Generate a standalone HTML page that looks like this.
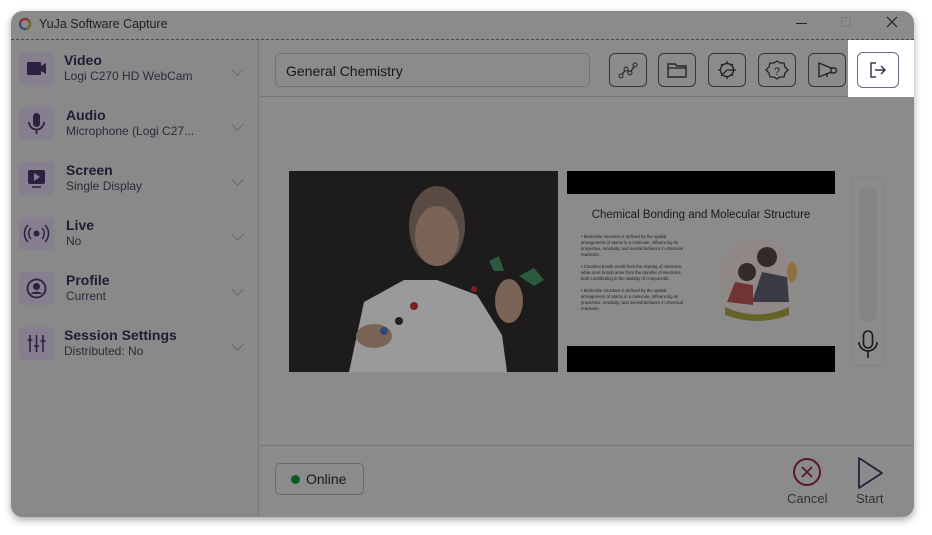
<!DOCTYPE html>
<html><head><meta charset="utf-8"><style>
*{margin:0;padding:0;box-sizing:border-box}
body{width:932px;height:535px;background:#fff;font-family:"Liberation Sans",sans-serif;position:relative;overflow:hidden}
.win{position:absolute;left:11px;top:11px;width:903px;height:506px;background:#8b8b8b;border-radius:12px;box-shadow:0 3px 8px rgba(0,0,0,.35);overflow:hidden}
.abs{position:absolute}
.tb{left:0;top:0;width:903px;height:29px;border-bottom:1px dashed #4a4a4a}
.side{left:0;top:29px;width:248px;height:477px;border-right:1px solid #777;background:#898989}
.tile{position:absolute;left:8px;width:35px;height:33px;background:#857f8f;border-radius:4px}
.tt{position:absolute;font-weight:bold;font-size:14px;color:#221c33}
.st{position:absolute;font-size:12px;color:#2e2a38}
.chev{position:absolute;left:222px;width:9px;height:9px;border-right:1.5px solid #6a6a6a;border-bottom:1.5px solid #6a6a6a;transform:rotate(45deg)}
.btn{position:absolute;top:42px;width:38px;height:34px;border:1px solid #34343c;border-radius:6px}
</style></head><body>
<div class="win">
 <div class="abs tb">
  <svg class="abs" style="left:6px;top:5px" width="16" height="16" viewBox="0 0 16 16"><path d="M3 8a5 5 0 0 1 9-3" stroke="#8a3a3a" stroke-width="2.5" fill="none"/><path d="M12 5a5 5 0 0 1-3 8" stroke="#6b6a2a" stroke-width="2.5" fill="none"/><path d="M9 13a5 5 0 0 1-6-5" stroke="#3a4f80" stroke-width="2.5" fill="none"/></svg>
  <div class="abs" style="left:28px;top:6px;font-size:12.5px;color:#222">YuJa Software Capture</div>
  <div class="abs" style="left:785px;top:12px;width:11px;height:1px;background:#222"></div>
  <div class="abs" style="left:830px;top:6px;width:10px;height:10px;border:1px solid #7a7a7a"></div>
  <svg class="abs" style="left:875px;top:5px" width="12" height="12"><path d="M1 1l10 10M11 1L1 11" stroke="#222" stroke-width="1.2"/></svg>
 </div>
 <div class="abs side">
  <div class="tile" style="top:12px"><svg width="35" height="33"><rect x="8" y="10" width="14" height="13" rx="1" fill="#2a2240"/><path d="M22 14l5-3v11l-5-3z" fill="#2a2240"/></svg></div>
  <div class="tt" style="left:53px;top:12px">Video</div><div class="st" style="left:53px;top:29px">Logi C270 HD WebCam</div><div class="chev" style="top:25px"></div>
  <div class="tile" style="top:67px"><svg width="35" height="33"><rect x="14" y="6" width="7" height="14" rx="3.5" fill="#2a2240"/><path d="M10 15a7.5 7.5 0 0 0 15 0M17.5 22v5" stroke="#2a2240" stroke-width="1.8" fill="none"/></svg></div>
  <div class="tt" style="left:55px;top:67px">Audio</div><div class="st" style="left:55px;top:84px">Microphone (Logi C27...</div><div class="chev" style="top:80px"></div>
  <div class="tile" style="top:122px"><svg width="35" height="33"><rect x="9" y="8" width="17" height="14" rx="2" fill="#2a2240"/><path d="M15 11v8l6-4z" fill="#857f8f"/><path d="M13 25h9" stroke="#2a2240" stroke-width="1.5"/></svg></div>
  <div class="tt" style="left:55px;top:122px">Screen</div><div class="st" style="left:55px;top:139px">Single Display</div><div class="chev" style="top:135px"></div>
  <div class="tile" style="top:177px"><svg width="35" height="33"><circle cx="17.5" cy="16.5" r="3" fill="#2a2240"/><path d="M12 11a8 8 0 0 0 0 11M23 11a8 8 0 0 1 0 11M9 8a12 12 0 0 0 0 17M26 8a12 12 0 0 1 0 17" stroke="#2a2240" stroke-width="1.5" fill="none"/></svg></div>
  <div class="tt" style="left:55px;top:177px">Live</div><div class="st" style="left:55px;top:194px">No</div><div class="chev" style="top:190px"></div>
  <div class="tile" style="top:232px"><svg width="35" height="33"><circle cx="17.5" cy="16.5" r="9" stroke="#2a2240" stroke-width="1.8" fill="none"/><circle cx="17.5" cy="14.5" r="3.5" fill="#2a2240"/><path d="M11.5 22a7 5 0 0 1 12 0" fill="#2a2240"/></svg></div>
  <div class="tt" style="left:55px;top:232px">Profile</div><div class="st" style="left:55px;top:249px">Current</div><div class="chev" style="top:245px"></div>
  <div class="tile" style="top:287px"><svg width="35" height="33"><path d="M11 8v17M17.5 8v17M24 8v17M8.5 13h5M15 19h5M21.5 14h5" stroke="#2a2240" stroke-width="1.6"/></svg></div>
  <div class="tt" style="left:53px;top:287px">Session Settings</div><div class="st" style="left:53px;top:304px">Distributed: No</div><div class="chev" style="top:300px"></div>
 </div>
 <div class="abs" style="left:249px;top:85px;width:654px;height:1px;background:#777"></div>
 <div class="abs" style="left:264px;top:42px;width:315px;height:34px;border:1px solid #737373;border-radius:5px;font-size:14px;color:#181818;padding:9px 10px">General Chemistry</div>
 <div class="btn" style="left:598px"><svg width="36" height="32"><path d="M11 22l5-7 4 4 5-8" stroke="#24242a" stroke-width="1.3" fill="none"/><circle cx="11" cy="22" r="2" fill="#8b8b8b" stroke="#24242a"/><circle cx="16" cy="15" r="2" fill="#8b8b8b" stroke="#24242a"/><circle cx="20" cy="19" r="2" fill="#8b8b8b" stroke="#24242a"/><circle cx="25" cy="11" r="2" fill="#8b8b8b" stroke="#24242a"/></svg></div>
 <div class="btn" style="left:647px"><svg width="36" height="32"><path d="M9 10h7l2 2h9v11H9z" stroke="#24242a" stroke-width="1.4" fill="none"/><path d="M9 14h18" stroke="#24242a" stroke-width="1.2"/></svg></div>
 <div class="btn" style="left:697px"><svg width="36" height="32"><circle cx="18" cy="16" r="6.5" stroke="#24242a" stroke-width="1.4" fill="none"/><path d="M18 7v3M18 22v3M9 16h3M24 16h3M12 10l2 2M22 20l2 2M12 22l2-2M22 12l2-2M18 16h6M18 16l-4 4" stroke="#24242a" stroke-width="1.3"/></svg></div>
 <div class="btn" style="left:747px"><svg width="36" height="32"><path d="M18 7l3 2 4 0 1 4 3 3-3 3-1 4-4 0-3 2-3-2-4 0-1-4-3-3 3-3 1-4 4 0z" stroke="#24242a" stroke-width="1.3" fill="none"/><text x="18" y="21" font-size="11" text-anchor="middle" fill="#24242a" font-family="Liberation Sans">?</text></svg></div>
 <div class="btn" style="left:797px"><svg width="36" height="32"><path d="M10 9l12 5v4l-12 5z" stroke="#24242a" stroke-width="1.4" fill="none"/><path d="M22 14h3a2.5 2.5 0 0 1 0 5h-3M18 19v4" stroke="#24242a" stroke-width="1.4" fill="none"/></svg></div>
 <div class="abs" style="left:837px;top:29px;width:66px;height:57px;background:#fff"></div>
 <div class="btn" style="left:846px;top:41px;width:42px;height:36px;border-color:#6e6880"><svg width="40" height="34"><path d="M18 10h-5v14h5" stroke="#3a3550" stroke-width="1.5" fill="none"/><path d="M17 17h10M23 13l4 4-4 4" stroke="#3a3550" stroke-width="1.5" fill="none"/></svg></div>
 <div class="abs" style="left:278px;top:160px;width:269px;height:201px;background:#1d1b1b;overflow:hidden">
  <svg width="269" height="201"><ellipse cx="148" cy="55" rx="28" ry="40" fill="#5a4a44"/><ellipse cx="148" cy="65" rx="22" ry="30" fill="#7a6458"/><path d="M60 201l15-70 40-22 33 0 40 15 25 40 5 37z" fill="#9a9a9a"/><ellipse cx="85" cy="165" rx="18" ry="12" fill="#7a6458"/><ellipse cx="220" cy="130" rx="14" ry="22" fill="#7a6458"/><circle cx="110" cy="150" r="4" fill="#222"/><circle cx="125" cy="135" r="4" fill="#7a2222"/><circle cx="95" cy="160" r="4" fill="#2a4a70"/><path d="M230 105l15-8 10 12-10 6z M200 90l10-5 5 15-10 0z" fill="#2a5a40"/><circle cx="185" cy="118" r="3" fill="#7a2222"/></svg>
 </div>
 <div class="abs" style="left:556px;top:160px;width:268px;height:201px;background:#000">
  <div class="abs" style="left:0;top:23px;width:268px;height:152px;background:#8b8b8b">
   <div class="abs" style="left:0;top:15px;width:268px;text-align:center;font-size:11.5px;color:#1a1a1a">Chemical Bonding and Molecular Structure</div>
   <div class="abs" style="left:14px;top:40px;width:110px;font-size:4.3px;line-height:6px;color:#1e1e1e">• Molecular structure is defined by the spatial arrangement of atoms in a molecule, influencing its properties, reactivity, and overall behavior in chemical reactions.<br><br>• Covalent bonds result from the sharing of electrons, while ionic bonds arise from the transfer of electrons, both contributing to the stability of compounds.<br><br>• Molecular structure is defined by the spatial arrangement of atoms in a molecule, influencing its properties, reactivity, and overall behavior in chemical reactions.</div>
   <svg class="abs" style="left:140px;top:38px" width="100" height="90"><ellipse cx="50" cy="45" rx="38" ry="38" fill="#908886"/><path d="M18 75q32 15 64 0l0 8q-32 12-64 0z" fill="#666228"/><circle cx="60" cy="25" r="10" fill="#332a2a"/><circle cx="40" cy="40" r="9" fill="#332a2a"/><path d="M45 70l10-30 25 5 2 25z" fill="#3a3a44"/><path d="M20 70l8-20 18 3 0 20z" fill="#703434"/><ellipse cx="85" cy="40" rx="5" ry="10" fill="#8e7040"/></svg>
  </div>
 </div>
 <div class="abs" style="left:840px;top:166px;width:33px;height:189px;border:1px solid #828282;border-radius:5px"></div>
 <div class="abs" style="left:848px;top:176px;width:18px;height:135px;border-radius:9px;background:#858585"></div>
 <svg class="abs" style="left:845px;top:318px" width="24" height="34"><rect x="7.5" y="2" width="9" height="17" rx="4.5" stroke="#181818" stroke-width="1.6" fill="none"/><path d="M3 13a9 9 0 0 0 18 0M12 22v7" stroke="#181818" stroke-width="1.6" fill="none"/></svg>
 <div class="abs" style="left:249px;top:434px;width:654px;height:1px;background:#777"></div>
 <div class="abs" style="left:264px;top:452px;width:89px;height:32px;border:1px solid #6a6a6a;border-radius:5px;font-size:14px;color:#181818;padding:7px 0 0 30px">Online<div class="abs" style="left:15px;top:11px;width:9px;height:9px;border-radius:50%;background:#0c5a2a"></div></div>
 <svg class="abs" style="left:781px;top:446px" width="30" height="30"><circle cx="15" cy="15" r="13" stroke="#5a1828" stroke-width="2" fill="none"/><path d="M10 10l10 10M20 10l-10 10" stroke="#5a1828" stroke-width="1.8"/></svg>
 <div class="abs" style="left:776px;top:480px;font-size:13px;color:#333">Cancel</div>
 <svg class="abs" style="left:845px;top:445px" width="30" height="34"><path d="M3 2l23 15-23 15z" stroke="#22223a" stroke-width="1.8" fill="none" stroke-linejoin="round"/></svg>
 <div class="abs" style="left:845px;top:480px;font-size:13px;color:#333">Start</div>
</div>
</body></html>
